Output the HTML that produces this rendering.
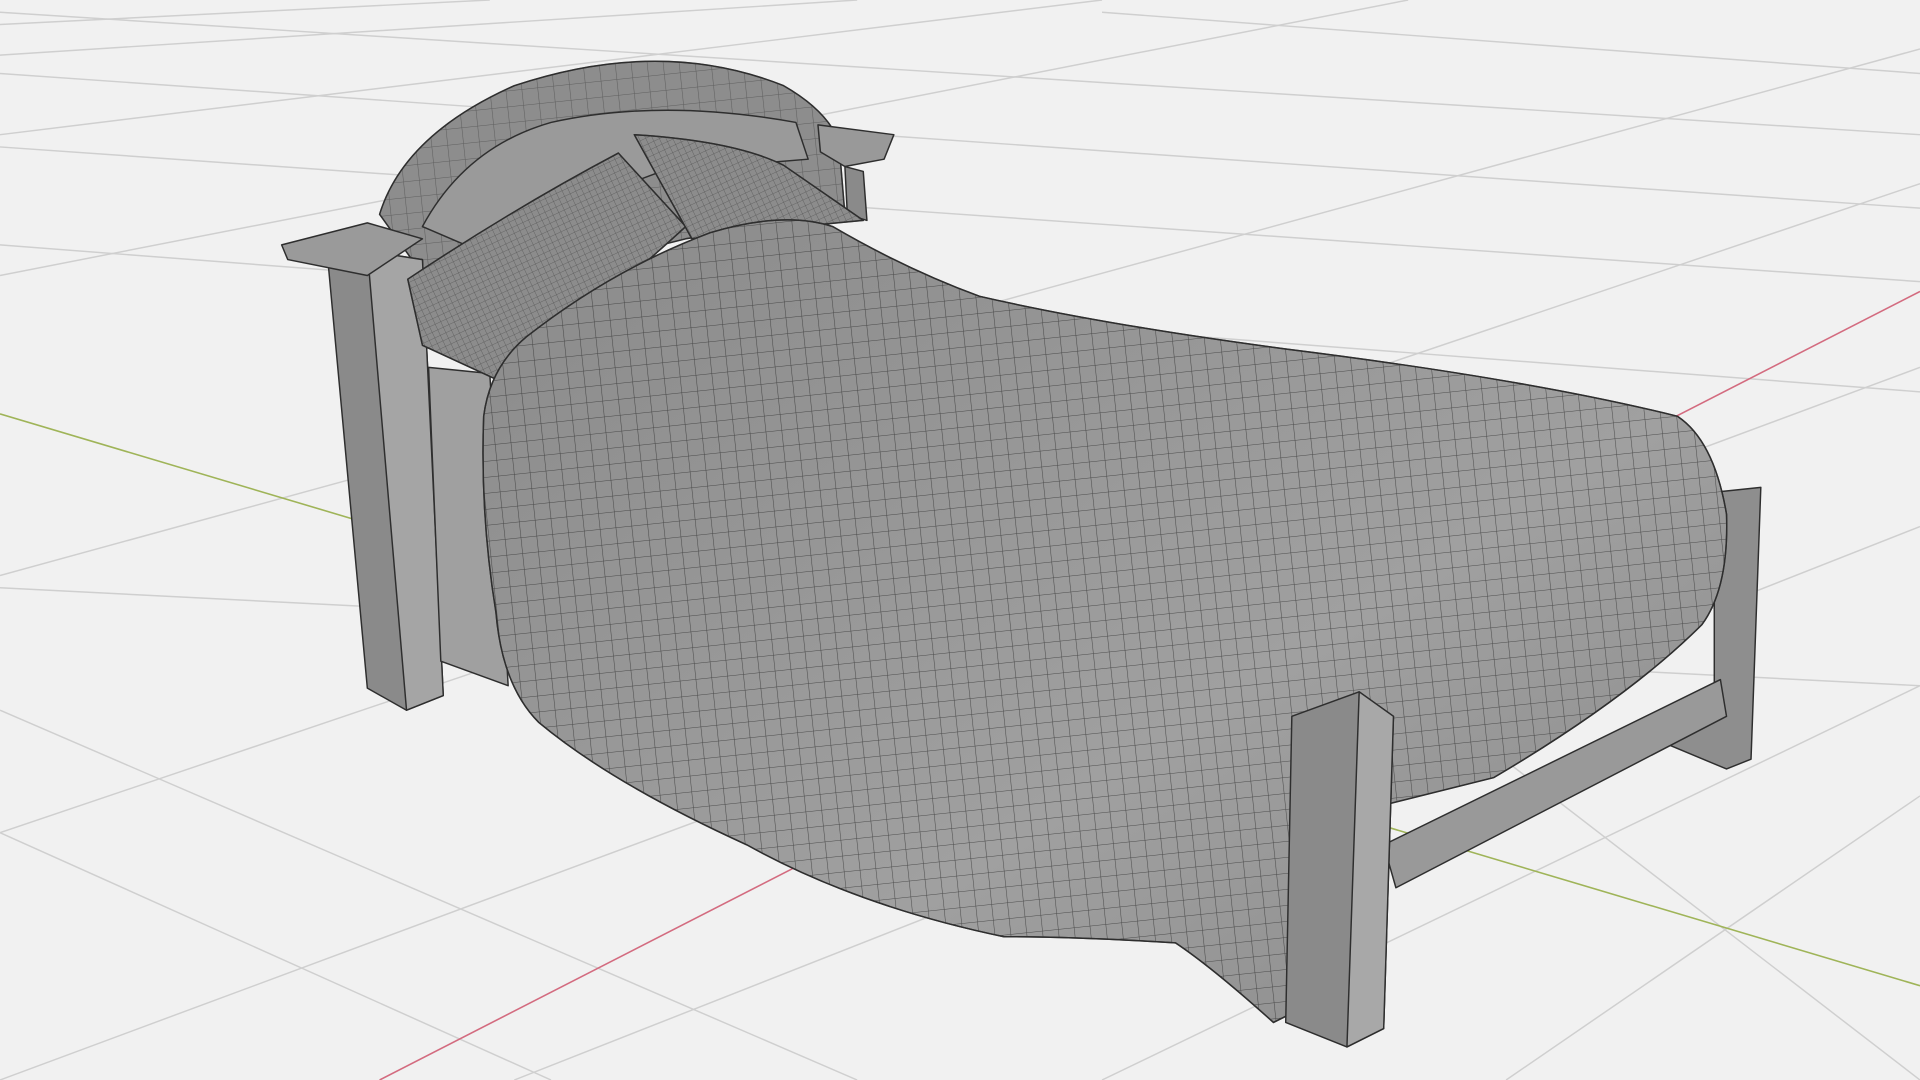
<!DOCTYPE html>
<html><head><meta charset="utf-8"><style>
html,body{margin:0;padding:0;width:1920px;height:1080px;overflow:hidden;background:#f1f1f1}
svg{display:block}
</style></head><body>
<svg width="1920" height="1080" viewBox="0 0 1568 882" preserveAspectRatio="none" xmlns="http://www.w3.org/2000/svg">
<defs>
<pattern id="mesh" width="13" height="13" patternUnits="userSpaceOnUse" patternTransform="rotate(-6)">
<path d="M0 0H13M0 0V13" stroke="#333" stroke-width="0.9" fill="none"/>
</pattern>
<pattern id="fine" width="5" height="5" patternUnits="userSpaceOnUse" patternTransform="rotate(-25)">
<path d="M0 0H5M0 0V5" stroke="#333" stroke-width="0.6" fill="none"/>
</pattern>
<linearGradient id="bl" x1="0" y1="0" x2="1" y2="1">
<stop offset="0" stop-color="#8a8a8a"/><stop offset="0.6" stop-color="#a0a0a0"/><stop offset="1" stop-color="#888"/>
</linearGradient>
</defs>
<rect width="1568" height="882" fill="#f1f1f1"/>
<g stroke="#cfcfcf" stroke-width="1.2" fill="none">
<path d="M0 45L700 0"/><path d="M0 110L900 0"/><path d="M0 225L1150 0"/><path d="M0 470L1568 40"/>
<path d="M0 680L1568 150"/><path d="M0 882L1568 300"/>
<path d="M420 882L1568 430"/><path d="M900 882L1568 560"/>
<path d="M0 10L1568 110"/><path d="M0 60L1568 170"/><path d="M0 120L1568 230"/><path d="M0 200L1568 320"/>
<path d="M0 480L1568 560"/><path d="M0 580L700 882"/><path d="M0 680L450 882"/><path d="M900 10L1568 60"/>
<path d="M1150 560L1568 882"/><path d="M1230 882L1568 650"/><path d="M400 0L0 20"/>
</g>
<path d="M310 882L1568 238" stroke="#d36b7f" stroke-width="1.3"/>
<path d="M0 338L1568 805" stroke="#9fb458" stroke-width="1.3"/>
<g stroke="#2e2e2e" stroke-width="1.2" stroke-linejoin="round">
<path d="M310 175Q330 110 420 70Q540 30 640 70Q675 90 685 115L690 175L560 195L360 245Z" fill="#8d8d8d"/>
<path d="M310 175Q330 110 420 70Q540 30 640 70Q675 90 685 115L690 175L560 195L360 245Z" fill="url(#mesh)" opacity="0.5"/>
<path d="M345 185Q380 120 450 100Q540 80 650 100L660 130L540 140L380 200Z" fill="#9a9a9a"/>
<path d="M268 215L300 205L345 212L362 568L332 580L300 562Z" fill="#8a8a8a"/>
<path d="M300 205L345 212L362 568L332 580Z" fill="#a5a5a5"/>
<path d="M230 200L300 182L345 195L300 225L235 212Z" fill="#9a9a9a"/>
<path d="M668 102L730 110L722 130L690 136L670 124Z" fill="#999"/>
<path d="M690 136L705 140L708 180L692 175Z" fill="#8a8a8a"/>
<path d="M350 300L400 305L415 560L360 540Z" fill="#a0a0a0"/>
<path d="M333 228Q420 170 505 125L560 185Q500 240 410 312L345 282Z" fill="#8c8c8c"/>
<path d="M333 228Q420 170 505 125L560 185Q500 240 410 312L345 282Z" fill="url(#fine)" opacity="0.6"/>
<path d="M518 110Q600 115 640 135L705 180L600 190L565 195Z" fill="#8c8c8c"/>
<path d="M518 110Q600 115 640 135L705 180L600 190L565 195Z" fill="url(#fine)" opacity="0.6"/>
<path d="M1400 402L1438 398L1430 620L1410 628L1362 608L1400 560Z" fill="#8e8e8e"/>
<path d="M1130 690L1405 555L1410 585L1140 725Z" fill="#999"/>
<path id="blk" d="M395 340Q400 300 430 275Q500 220 580 190Q640 172 680 185Q740 220 800 242Q900 265 1050 285Q1250 310 1370 340Q1400 360 1410 420Q1412 480 1390 510Q1330 570 1220 635L1120 660Q1085 740 1060 825L1040 835Q990 790 960 770Q880 765 820 765Q700 740 610 690Q500 640 440 590Q410 560 405 500Q392 420 395 340Z" fill="url(#bl)"/>
<path d="M395 340Q400 300 430 275Q500 220 580 190Q640 172 680 185Q740 220 800 242Q900 265 1050 285Q1250 310 1370 340Q1400 360 1410 420Q1412 480 1390 510Q1330 570 1220 635L1120 660Q1085 740 1060 825L1040 835Q990 790 960 770Q880 765 820 765Q700 740 610 690Q500 640 440 590Q410 560 405 500Q392 420 395 340Z" fill="url(#mesh)" opacity="0.75"/>
<path d="M1055 585L1110 565L1138 585L1130 840L1100 855L1050 835Z" fill="#8a8a8a"/>
<path d="M1110 565L1138 585L1130 840L1100 855Z" fill="#a8a8a8"/>
</g>
</svg>
</body></html>
